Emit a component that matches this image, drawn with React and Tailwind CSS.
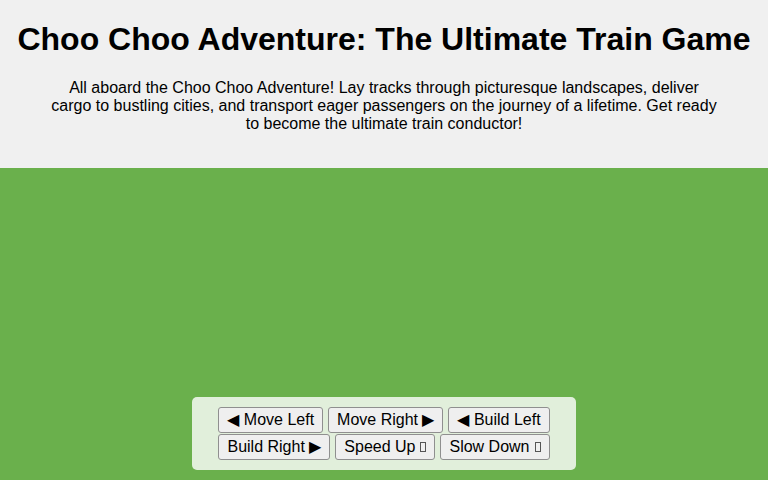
import React from "react";

const buttonClass =
  "flex items-center rounded-[3px] border border-[#8f8f8f] bg-[#efefef] px-[8px] py-[3px] text-base leading-[18px] text-black hover:bg-[#e5e5e5]";

function Missing() {
  return <span className="ml-[5px] inline-block h-[10px] w-[6px] border border-[#555]" />;
}

const controls = [
  ["◀ Move Left", "left", false],
  ["Move Right ▶", "right", false],
  ["◀ Build Left", "buildLeft", false],
  ["Build Right ▶", "buildRight", false],
  ["Speed Up", "faster", true],
  ["Slow Down", "slower", true],
];

export default function App() {
  return (
    <div className="flex h-screen flex-col font-['Liberation_Sans',Arial,sans-serif] text-black">
      <header className="bg-[#f0f0f0] pb-[35px] pt-[21px] text-center">
        <h1 className="whitespace-nowrap text-[32px] font-bold leading-[37px]">
          Choo Choo Adventure: The Ultimate Train Game
        </h1>
        <p className="mx-auto mt-[21px] max-w-[672px] text-base leading-[18px]">
          All aboard the Choo Choo Adventure! Lay tracks through picturesque landscapes, deliver
          cargo to bustling cities, and transport eager passengers on the journey of a lifetime. Get
          ready to become the ultimate train conductor!
        </p>
      </header>

      <main className="relative flex-1 bg-[#6ab04c]">
        <div className="absolute bottom-[10px] left-1/2 w-[384px] -translate-x-1/2 rounded-[5px] bg-white/80 p-[10px]">
          <div className="flex flex-wrap justify-center gap-x-[5px] gap-y-[1px]">
            {controls.map(([label, action, icon]) => (
              <button key={action} type="button" className={buttonClass}>
                {label}
                {icon && <Missing />}
              </button>
            ))}
          </div>
        </div>
      </main>
    </div>
  );
}
